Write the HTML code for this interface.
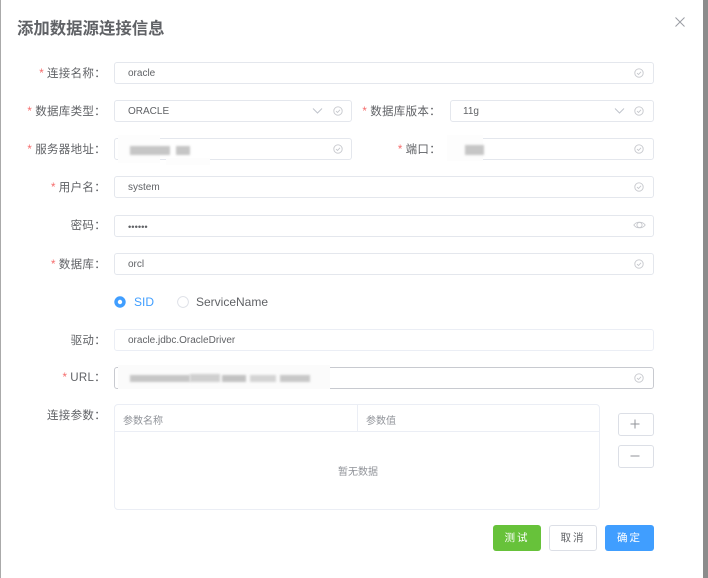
<!DOCTYPE html>
<html lang="zh"><head><meta charset="utf-8"><title>添加数据源连接信息</title>
<style>
html,body{margin:0;padding:0;background:#fff}
body{width:708px;height:578px;position:relative;overflow:hidden;font-family:"Liberation Sans","Noto Sans CJK SC",sans-serif;color:#606266}
#p{position:absolute;left:0;top:0;width:708px;height:578px;filter:blur(.3px)}
.abs{position:absolute}
.inp{position:absolute;height:20px;border:1px solid #e4e7ed;border-radius:3px;background:#fff;box-sizing:content-box}
.v{position:absolute;font-size:10px;line-height:22px;color:#606266;white-space:nowrap;margin-top:1px}
.l{position:absolute;font-size:11.5px;line-height:22px;color:#606266;text-align:right;white-space:nowrap;letter-spacing:.3px;margin-top:1px}
.m{right:602px}
.n{right:267px}
.l i{font-style:normal;color:#f56c6c;margin-right:3px}
svg{position:absolute;display:block}
.b{position:absolute;background:#c6c6c6;filter:blur(1px)}
.btn{position:absolute;top:525px;height:26px;box-sizing:border-box;border-radius:3px;font-size:10.5px;line-height:26px;text-align:center;letter-spacing:2px}
</style></head><body><div id="p">
<div class="abs" style="left:0;top:0;width:1px;height:578px;background:#aaa"></div>
<div class="abs" style="left:703px;top:0;width:5px;height:578px;background:#8c8c8c"></div>

<div class="abs" style="left:17px;top:16px;font-size:16.4px;line-height:24px;font-weight:bold;color:#606266;margin-top:1px">添加数据源连接信息</div>
<svg style="left:674px;top:16px" width="12" height="12" viewBox="0 0 12 12"><path d="M1.5 1.5L10.5 10.5M10.5 1.5L1.5 10.5" stroke="#9a9da3" stroke-width="1" fill="none"/></svg>

<div class="l m" style="top:62px"><i>*</i>连接名称：</div>
<div class="inp" style="left:114px;top:62px;width:538px"></div>
<div class="v" style="left:128px;top:62px">oracle</div>
<svg style="left:634px;top:68px" width="10" height="10" viewBox="0 0 10 10"><circle cx="5" cy="5" r="4.2" fill="none" stroke="#c6c8cd" stroke-width=".9"/><path d="M3 5.1L4.5 6.5L7 3.8" fill="none" stroke="#c6c8cd" stroke-width=".9"/></svg>

<div class="l m" style="top:100px"><i>*</i>数据库类型：</div>
<div class="inp" style="left:114px;top:100px;width:236px"></div>
<div class="v" style="left:128px;top:100px">ORACLE</div>
<svg style="left:312px;top:107px" width="11" height="8" viewBox="0 0 11 8"><path d="M1 1.5L5.5 6L10 1.5" fill="none" stroke="#c0c4cc" stroke-width="1"/></svg>
<svg style="left:333px;top:106px" width="10" height="10" viewBox="0 0 10 10"><circle cx="5" cy="5" r="4.2" fill="none" stroke="#c6c8cd" stroke-width=".9"/><path d="M3 5.1L4.5 6.5L7 3.8" fill="none" stroke="#c6c8cd" stroke-width=".9"/></svg>

<div class="l n" style="top:100px"><i>*</i>数据库版本：</div>
<div class="inp" style="left:450px;top:100px;width:202px"></div>
<div class="v" style="left:463px;top:100px">11g</div>
<svg style="left:614px;top:107px" width="11" height="8" viewBox="0 0 11 8"><path d="M1 1.5L5.5 6L10 1.5" fill="none" stroke="#c0c4cc" stroke-width="1"/></svg>
<svg style="left:634px;top:106px" width="10" height="10" viewBox="0 0 10 10"><circle cx="5" cy="5" r="4.2" fill="none" stroke="#c6c8cd" stroke-width=".9"/><path d="M3 5.1L4.5 6.5L7 3.8" fill="none" stroke="#c6c8cd" stroke-width=".9"/></svg>

<div class="l m" style="top:138px"><i>*</i>服务器地址：</div>
<div class="inp" style="left:114px;top:138px;width:236px"></div>
<div class="abs" style="left:118px;top:135px;width:42px;height:28px;background:#fdfdfd"></div>
<div class="abs" style="left:166px;top:158px;width:44px;height:7px;background:#fdfdfd"></div>
<div class="b" style="left:130px;top:146px;width:40px;height:9px"></div>
<div class="b" style="left:176px;top:146px;width:14px;height:9px"></div>
<svg style="left:333px;top:144px" width="10" height="10" viewBox="0 0 10 10"><circle cx="5" cy="5" r="4.2" fill="none" stroke="#c6c8cd" stroke-width=".9"/><path d="M3 5.1L4.5 6.5L7 3.8" fill="none" stroke="#c6c8cd" stroke-width=".9"/></svg>

<div class="l n" style="top:138px"><i>*</i>端口：</div>
<div class="inp" style="left:450px;top:138px;width:202px"></div>
<div class="abs" style="left:447px;top:135px;width:36px;height:26px;background:#fdfdfd"></div>
<div class="b" style="left:465px;top:145px;width:19px;height:10px"></div>
<svg style="left:634px;top:144px" width="10" height="10" viewBox="0 0 10 10"><circle cx="5" cy="5" r="4.2" fill="none" stroke="#c6c8cd" stroke-width=".9"/><path d="M3 5.1L4.5 6.5L7 3.8" fill="none" stroke="#c6c8cd" stroke-width=".9"/></svg>

<div class="l m" style="top:176px"><i>*</i>用户名：</div>
<div class="inp" style="left:114px;top:176px;width:538px"></div>
<div class="v" style="left:128px;top:176px">system</div>
<svg style="left:634px;top:182px" width="10" height="10" viewBox="0 0 10 10"><circle cx="5" cy="5" r="4.2" fill="none" stroke="#c6c8cd" stroke-width=".9"/><path d="M3 5.1L4.5 6.5L7 3.8" fill="none" stroke="#c6c8cd" stroke-width=".9"/></svg>

<div class="l m" style="top:214px">密码：</div>
<div class="inp" style="left:114px;top:215px;width:538px"></div>
<div class="v" style="left:128px;top:215px;font-size:9.4px">••••••</div>
<svg style="left:633px;top:220px" width="13" height="10" viewBox="0 0 13 10"><path d="M.8 5C3.5 1.2 9.5 1.2 12.2 5C9.5 8.8 3.5 8.8 .8 5Z" fill="none" stroke="#c6c8cd" stroke-width=".9"/><circle cx="6.5" cy="5" r="2.6" fill="none" stroke="#c6c8cd" stroke-width=".9"/></svg>

<div class="l m" style="top:253px"><i>*</i>数据库：</div>
<div class="inp" style="left:114px;top:253px;width:538px"></div>
<div class="v" style="left:128px;top:253px">orcl</div>
<svg style="left:634px;top:259px" width="10" height="10" viewBox="0 0 10 10"><circle cx="5" cy="5" r="4.2" fill="none" stroke="#c6c8cd" stroke-width=".9"/><path d="M3 5.1L4.5 6.5L7 3.8" fill="none" stroke="#c6c8cd" stroke-width=".9"/></svg>

<svg style="left:114px;top:296px" width="12" height="12" viewBox="0 0 12 12"><circle cx="6" cy="6" r="5.7" fill="#409eff"/><circle cx="6" cy="6" r="2.2" fill="#fff"/></svg>
<div class="abs" style="left:134px;top:292px;font-size:12px;line-height:20px;color:#409eff">SID</div>
<svg style="left:177px;top:296px" width="12" height="12" viewBox="0 0 12 12"><circle cx="6" cy="6" r="5.4" fill="#fff" stroke="#dcdfe6" stroke-width=".9"/></svg>
<div class="abs" style="left:196px;top:292px;font-size:12px;line-height:20px;color:#606266">ServiceName</div>

<div class="l m" style="top:329px">驱动：</div>
<div class="inp" style="left:114px;top:329px;width:538px;border-color:#ebeef5"></div>
<div class="v" style="left:128px;top:329px">oracle.jdbc.OracleDriver</div>

<div class="l m" style="top:366px"><i>*</i>URL：</div>
<div class="inp" style="left:114px;top:367px;width:538px;border-color:#c8cad0"></div>
<div class="abs" style="left:118px;top:365px;width:212px;height:24px;background:#fbfbfb"></div>
<div class="b" style="left:130px;top:375px;width:60px;height:7px"></div>
<div class="b" style="left:190px;top:374px;width:30px;height:8px;background:#cfcfcf"></div>
<div class="b" style="left:222px;top:375px;width:24px;height:7px;background:#c2c2c2"></div>
<div class="b" style="left:250px;top:375px;width:26px;height:7px;background:#d4d4d4"></div>
<div class="b" style="left:280px;top:375px;width:30px;height:7px;background:#c8c8c8"></div>
<svg style="left:634px;top:373px" width="10" height="10" viewBox="0 0 10 10"><circle cx="5" cy="5" r="4.2" fill="none" stroke="#c6c8cd" stroke-width=".9"/><path d="M3 5.1L4.5 6.5L7 3.8" fill="none" stroke="#c6c8cd" stroke-width=".9"/></svg>

<div class="l m" style="top:404px">连接参数：</div>
<div class="abs" style="left:114px;top:404px;width:486px;height:106px;box-sizing:border-box;border:1px solid #ebeef5;border-radius:4px"></div>
<div class="abs" style="left:115px;top:431px;width:484px;height:1px;background:#ebeef5"></div>
<div class="abs" style="left:357px;top:405px;width:1px;height:26px;background:#ebeef5"></div>
<div class="abs" style="left:123px;top:412px;font-size:10px;line-height:20px;color:#909399">参数名称</div>
<div class="abs" style="left:366px;top:412px;font-size:10px;line-height:20px;color:#909399">参数值</div>
<div class="abs" style="left:338px;top:463px;font-size:10px;line-height:20px;color:#909399">暂无数据</div>

<div class="abs" style="left:618px;top:413px;width:36px;height:23px;box-sizing:border-box;border:1px solid #dcdfe6;border-radius:3px"></div>
<svg style="left:630px;top:419px" width="10" height="10" viewBox="0 0 10 10"><path d="M5 .5V9.5M.5 5H9.5" stroke="#909399" stroke-width="1" fill="none"/></svg>
<div class="abs" style="left:618px;top:445px;width:36px;height:23px;box-sizing:border-box;border:1px solid #dcdfe6;border-radius:3px"></div>
<svg style="left:630px;top:451px" width="10" height="10" viewBox="0 0 10 10"><path d="M.5 5H9.5" stroke="#909399" stroke-width="1" fill="none"/></svg>

<div class="btn" style="left:493px;width:48px;background:#67c23a;color:#fff">测试</div>
<div class="btn" style="left:549px;width:48px;background:#fff;border:1px solid #dcdfe6;color:#606266;line-height:24px">取消</div>
<div class="btn" style="left:605px;width:49px;background:#409eff;color:#fff">确定</div>
</div></body></html>
